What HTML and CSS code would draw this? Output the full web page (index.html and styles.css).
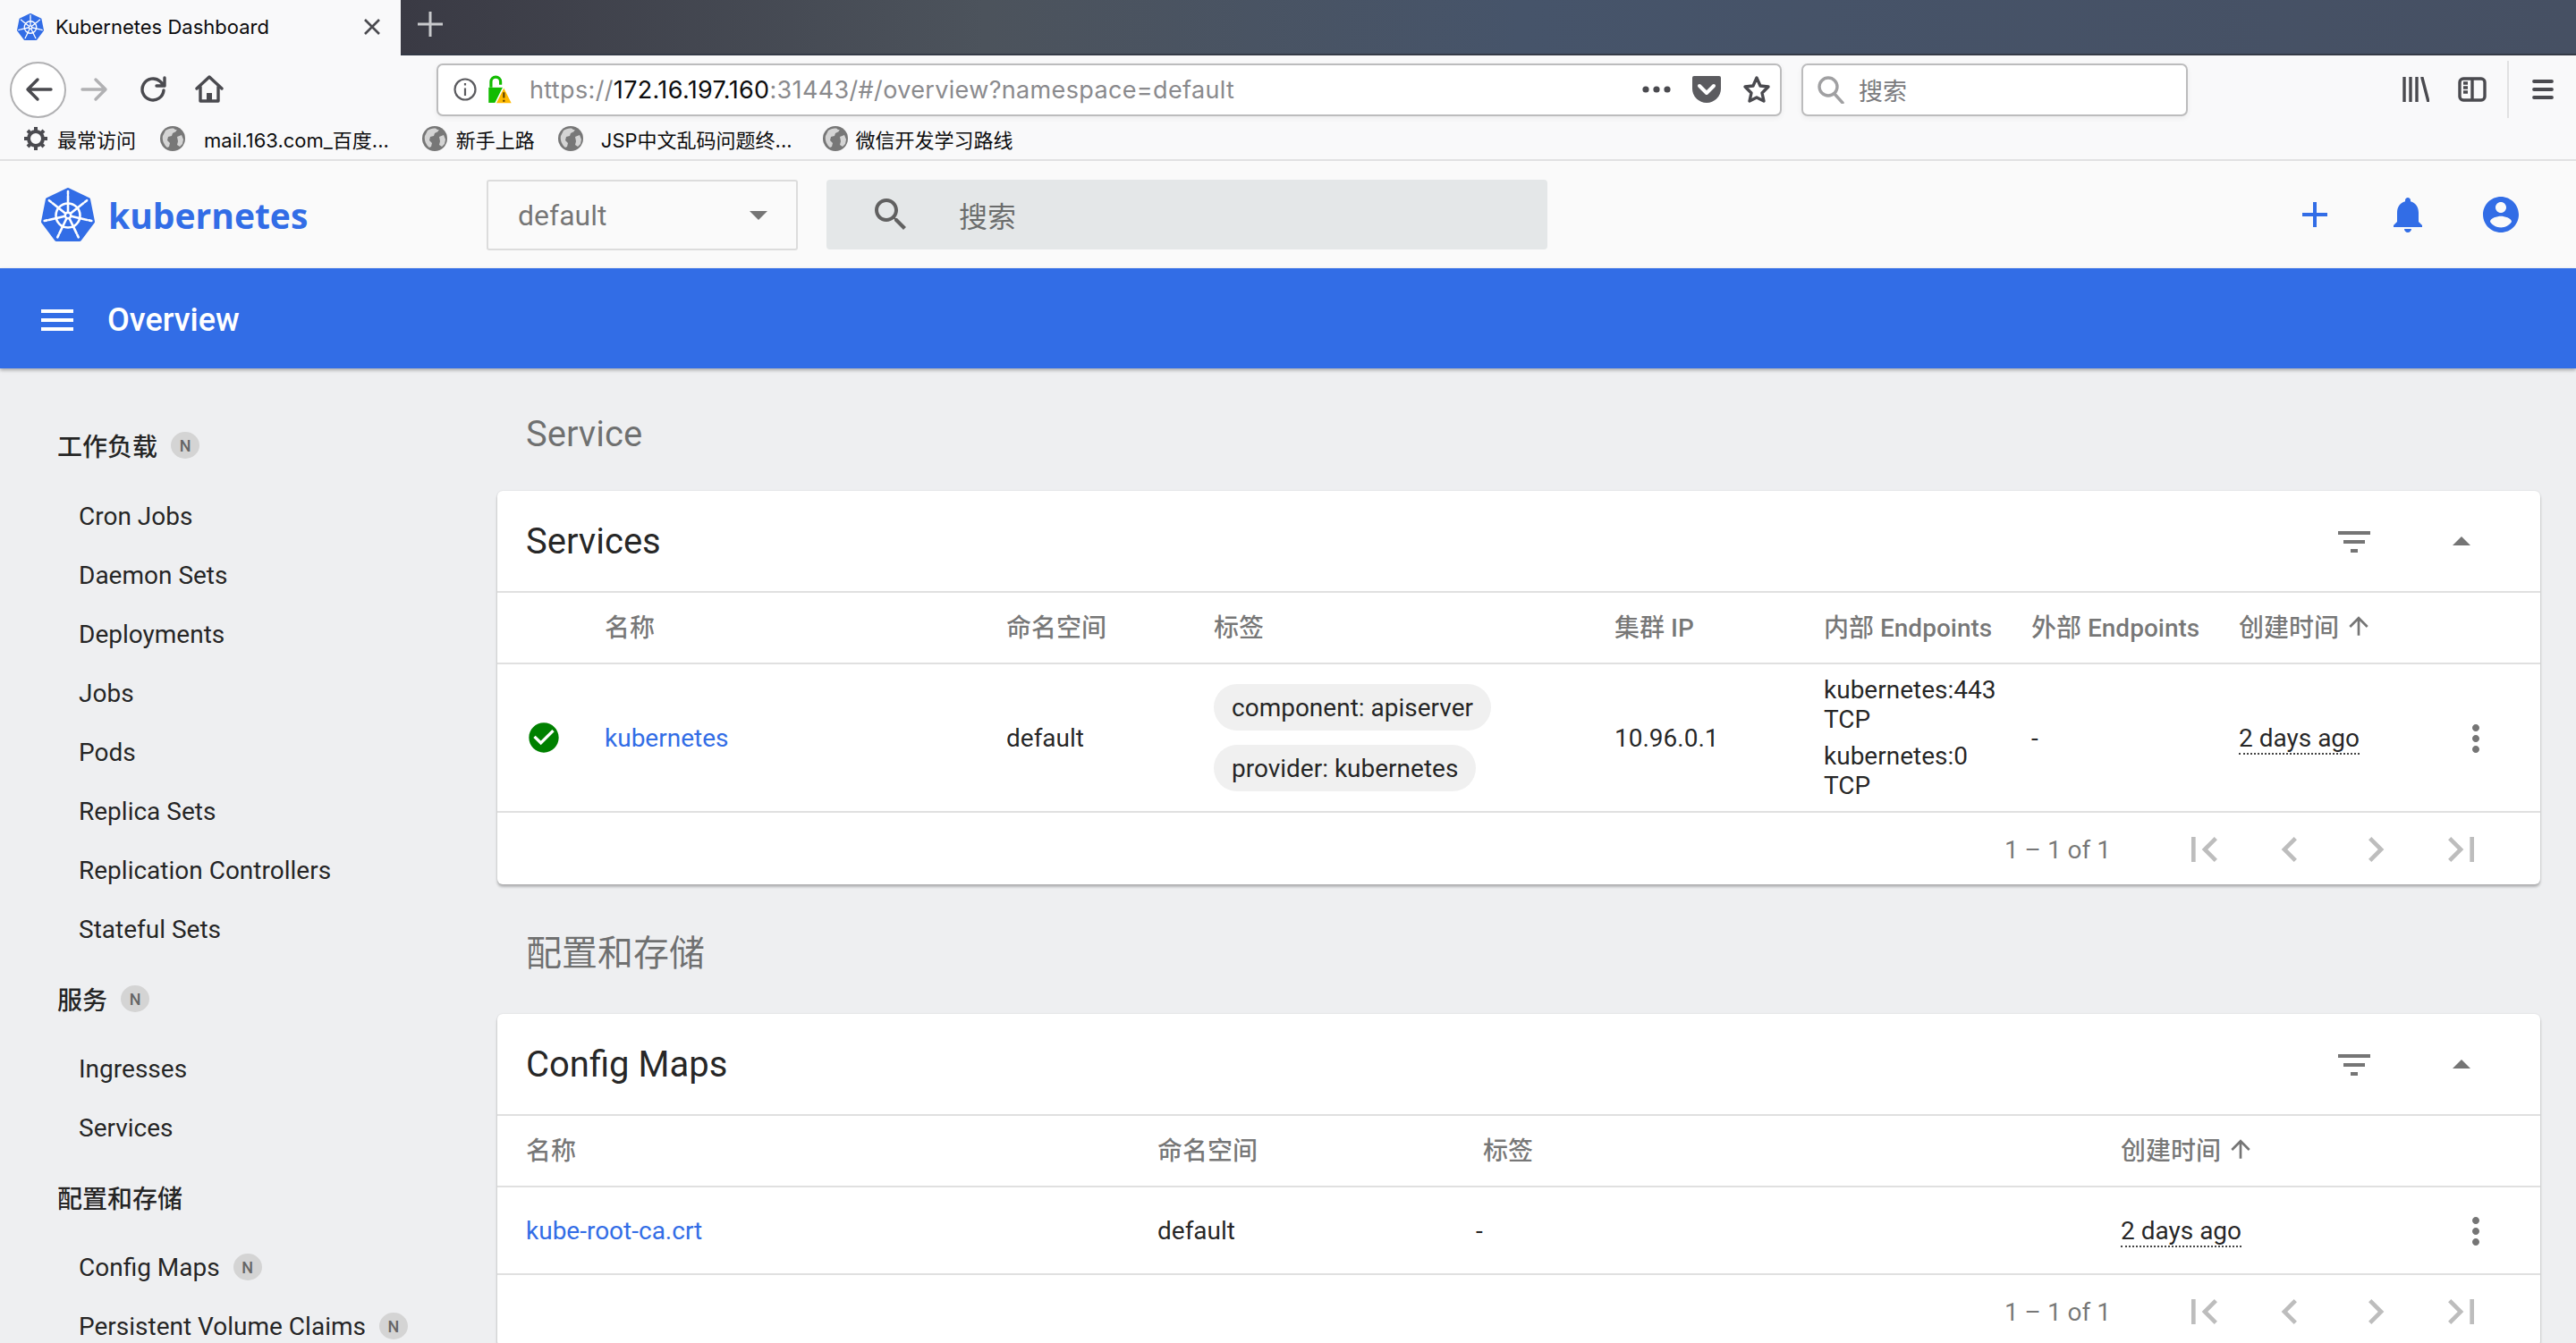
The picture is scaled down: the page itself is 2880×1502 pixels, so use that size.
FILE: index.html
```html
<!DOCTYPE html>
<html lang="zh">
<head>
<meta charset="utf-8">
<title>Kubernetes Dashboard</title>
<link rel="stylesheet" href="styles.css">
</head>
<body>
<svg class="sprite" aria-hidden="true">
  <defs>
    <g id="spoke">
      <line x1="30" y1="31" x2="30" y2="9" />
      <line x1="30" y1="7" x2="30" y2="4" />
    </g>
    <symbol id="k8s" viewBox="0 0 60 60">
      <path d="M30 2 L53 13 L58 38 L43 58 L17 58 L2 38 L7 13 Z" fill="#326de6" stroke="#326de6" stroke-width="4" stroke-linejoin="round"/>
      <g stroke="#fff" fill="none" stroke-width="2.6" stroke-linecap="round">
        <circle cx="30" cy="31" r="13.5"/>
        <use href="#spoke"/>
        <use href="#spoke" transform="rotate(51.4 30 31)"/>
        <use href="#spoke" transform="rotate(102.9 30 31)"/>
        <use href="#spoke" transform="rotate(154.3 30 31)"/>
        <use href="#spoke" transform="rotate(205.7 30 31)"/>
        <use href="#spoke" transform="rotate(257.1 30 31)"/>
        <use href="#spoke" transform="rotate(308.6 30 31)"/>
      </g>
      <circle cx="30" cy="31" r="4.5" fill="#fff"/>
      <circle cx="30" cy="31" r="2" fill="#326de6"/>
    </symbol>
    <symbol id="globe" viewBox="0 0 28 28">
      <circle cx="14" cy="14" r="14" fill="#777"/>
      <path d="M6 5c3-2 7-3 10-2l2 3-4 2-1 3-4 1-1 4 3 3-1 4-2 1C4 21 2 15 3 11zM19 12l5-2 2 5-1 5-3 3-3-2 1-4zM14 4h5l-2 2z" fill="#d4d4d4"/>
    </symbol>
    <symbol id="i-search" viewBox="0 0 24 24"><path d="M15.5 14h-.79l-.28-.27C15.41 12.59 16 11.11 16 9.5 16 5.91 13.09 3 9.5 3S3 5.91 3 9.5 5.91 16 9.5 16c1.61 0 3.09-.59 4.23-1.57l.27.28v.79l5 4.99L20.49 19l-4.99-5zm-6 0C7.01 14 5 11.99 5 9.5S7.01 5 9.5 5 14 7.01 14 9.5 11.99 14 9.5 14z"/></symbol>
    <symbol id="i-add" viewBox="0 0 24 24"><path d="M19 13h-6v6h-2v-6H5v-2h6V5h2v6h6v2z"/></symbol>
    <symbol id="i-bell" viewBox="0 0 24 24"><path d="M12 22c1.1 0 2-.9 2-2h-4c0 1.1.89 2 2 2zm6-6v-5c0-3.07-1.64-5.64-4.5-6.32V4c0-.83-.67-1.5-1.5-1.5s-1.5.67-1.5 1.5v.68C7.63 5.36 6 7.92 6 11v5l-2 2v1h16v-1l-2-2z"/></symbol>
    <symbol id="i-account" viewBox="0 0 24 24"><path d="M12 2C6.48 2 2 6.48 2 12s4.48 10 10 10 10-4.48 10-10S17.52 2 12 2zm0 3c1.66 0 3 1.34 3 3s-1.34 3-3 3-3-1.34-3-3 1.34-3 3-3zm0 14.2c-2.5 0-4.71-1.28-6-3.22.03-1.99 4-3.08 6-3.08 1.99 0 5.97 1.09 6 3.08-1.29 1.94-3.5 3.22-6 3.22z"/></symbol>
    <symbol id="i-filter" viewBox="0 0 24 24"><path d="M10 18h4v-2h-4v2zM3 6v2h18V6H3zm3 7h12v-2H6v2z"/></symbol>
    <symbol id="i-up" viewBox="0 0 24 24"><path d="M7 14l5-5 5 5z"/></symbol>
    <symbol id="i-sort" viewBox="0 0 24 24"><path d="M4 12l1.41 1.41L11 7.83V20h2V7.83l5.58 5.59L20 12l-8-8-8 8z"/></symbol>
    <symbol id="i-more" viewBox="0 0 24 24"><path d="M12 8c1.1 0 2-.9 2-2s-.9-2-2-2-2 .9-2 2 .9 2 2 2zm0 2c-1.1 0-2 .9-2 2s.9 2 2 2 2-.9 2-2-.9-2-2-2zm0 6c-1.1 0-2 .9-2 2s.9 2 2 2 2-.9 2-2-.9-2-2-2z"/></symbol>
    <symbol id="i-first" viewBox="0 0 24 24"><path d="M18.41 16.59L13.82 12l4.59-4.59L17 6l-6 6 6 6zM6 6h2v12H6z"/></symbol>
    <symbol id="i-prev" viewBox="0 0 24 24"><path d="M15.41 7.41L14 6l-6 6 6 6 1.41-1.41L10.83 12z"/></symbol>
    <symbol id="i-next" viewBox="0 0 24 24"><path d="M10 6L8.59 7.41 13.17 12l-4.58 4.59L10 18l6-6z"/></symbol>
    <symbol id="i-last" viewBox="0 0 24 24"><path d="M5.59 7.41L10.18 12l-4.59 4.59L7 18l6-6-6-6zM16 6h2v12h-2z"/></symbol>
    <symbol id="i-check" viewBox="0 0 24 24"><path d="M12 2C6.48 2 2 6.48 2 12s4.48 10 10 10 10-4.48 10-10S17.52 2 12 2zm-2 15l-5-5 1.41-1.41L10 14.17l7.59-7.59L19 8l-9 9z"/></symbol>
    <symbol id="i-menu" viewBox="0 0 24 24"><path d="M3 18h18v-2H3v2zm0-5h18v-2H3v2zm0-7v2h18V6H3z"/></symbol>
  </defs>
</svg>

<div class="tabstrip">
  <div class="tab">
    <svg class="tab-icon"><use href="#k8s"/></svg>
    <span class="tab-title">Kubernetes Dashboard</span>
    <svg class="tab-close" viewBox="0 0 20 20"><path d="M2 2L18 18M18 2L2 18"/></svg>
  </div>
  <svg class="tab-new" viewBox="0 0 28 28"><path d="M14 0V28M0 14H28"/></svg>
</div>

<div class="navbar">
  <span class="back-btn">
    <svg class="ff-icon" viewBox="0 0 32 32"><path d="M30 16H4M15 5L4 16L15 27"/></svg>
  </span>
  <svg class="ff-icon dim fwd" viewBox="0 0 32 32"><path d="M2 16H28M17 5L28 16L17 27"/></svg>
  <svg class="ff-icon reload" viewBox="0 0 32 32"><path d="M27 17a12 12 0 1 1-4-10l5 5M28 3V12H19"/></svg>
  <svg class="ff-icon home" viewBox="0 0 32 32"><path d="M2 15L16 2L30 15M6 13V29H26V13"/><path class="solid" d="M13 29V20H19V29Z"/></svg>
  <div class="urlbar">
    <svg class="info" viewBox="0 0 26 26"><circle cx="13" cy="13" r="11.5"/><path d="M13 11.5V20M13 6V8.5"/></svg>
    <svg class="lock" viewBox="0 0 28 30">
      <path d="M3 13H18V29H3Z" fill="#12bc00"/>
      <path d="M5.500 13V7a5 5 0 0 1 10 0V10" fill="none" stroke="#12bc00" stroke-width="3"/>
      <path d="M19 12L28 30H10Z" fill="#ffb900" stroke="#fff" stroke-width="1.500"/>
      <path d="M19 18V24M19 26V28" stroke="#5a3e00" stroke-width="2" fill="none"/>
    </svg>
    <span class="url"><span class="url-dim">https://</span>172.16.197.160<span class="url-dim">:31443/#/overview?namespace=default</span></span>
    <svg class="dots" viewBox="0 0 32 8"><circle cx="4" cy="4" r="3.600"/><circle cx="16" cy="4" r="3.600"/><circle cx="28" cy="4" r="3.600"/></svg>
    <svg class="pocket" viewBox="0 0 32 30"><path class="pk" d="M2 0H30a2 2 0 0 1 2 2V14A16 16 0 0 1 0 14V2a2 2 0 0 1 2-2Z"/><path class="pk-v" d="M8 11L16 19L24 11"/></svg>
    <svg class="star" viewBox="0 0 32 32"><path d="M16 3L20 12L29 13L22 20L24 29L16 25L8 29L10 20L3 13L12 12Z"/></svg>
  </div>
  <div class="searchbar">
    <svg class="sb-icon" viewBox="0 0 32 32"><circle cx="13" cy="13" r="10"/><path d="M20 21L29 31"/></svg>
    <span class="sb-text">搜索</span>
  </div>
  <svg class="lib" viewBox="0 0 30 28"><path d="M2 0V28M9 0V28M16 0V28M22 1L29 28"/></svg>
  <svg class="sidebar-ico" viewBox="0 0 32 28"><rect x="2" y="2" width="28" height="24" rx="4"/><path d="M16 2V26M6 7H11M6 12H11M6 17H11"/></svg>
  <span class="divider"></span>
  <svg class="burger" viewBox="0 0 24 24"><path d="M2 3H22M2 12H22M2 21H22"/></svg>
</div>

<div class="bookmarks">
  <svg class="gear" viewBox="0 0 28 28"><circle cx="14" cy="14" r="8" /><path d="M14 1V6M14 22V27M1 14H6M22 14H27M5 5L8.500 8.500M19.500 19.500L23 23M23 5L19.500 8.500M8.500 19.500L5 23"/></svg>
  <span class="bm bm-first">最常访问</span>
  <svg class="bm-globe g-mail"><use href="#globe"/></svg>
  <span class="bm bm-mail">mail.163.com_百度...</span>
  <svg class="bm-globe g-new"><use href="#globe"/></svg>
  <span class="bm bm-new">新手上路</span>
  <svg class="bm-globe g-jsp"><use href="#globe"/></svg>
  <span class="bm bm-jsp">JSP中文乱码问题终...</span>
  <svg class="bm-globe g-wx"><use href="#globe"/></svg>
  <span class="bm bm-wx">微信开发学习路线</span>
</div>

<header class="app-head">
  <svg class="logo-mark"><use href="#k8s"/></svg>
  <span class="logo-text">kubernetes</span>
  <div class="ns-select">
    <span>default</span>
    <svg class="ns-caret" viewBox="7 10 10 5"><path d="M7 10l5 5 5-5z"/></svg>
  </div>
  <div class="app-search">
    <svg class="app-search-icon"><use href="#i-search"/></svg>
    <span>搜索</span>
  </div>
  <div class="app-actions">
    <svg class="act"><use href="#i-add"/></svg>
    <svg class="act"><use href="#i-bell"/></svg>
    <svg class="act"><use href="#i-account"/></svg>
  </div>
</header>

<div class="titlebar">
  <svg class="titlebar-menu"><use href="#i-menu"/></svg>
  <span class="titlebar-text">Overview</span>
</div>

<div class="main">
  <nav class="side">
    <div class="side-head">工作负载<span class="n">N</span></div>
    <a class="side-item">Cron Jobs</a>
    <a class="side-item">Daemon Sets</a>
    <a class="side-item">Deployments</a>
    <a class="side-item">Jobs</a>
    <a class="side-item">Pods</a>
    <a class="side-item">Replica Sets</a>
    <a class="side-item">Replication Controllers</a>
    <a class="side-item">Stateful Sets</a>
    <div class="side-head">服务<span class="n">N</span></div>
    <a class="side-item">Ingresses</a>
    <a class="side-item">Services</a>
    <div class="side-head">配置和存储</div>
    <a class="side-item">Config Maps<span class="n">N</span></a>
    <a class="side-item">Persistent Volume Claims<span class="n">N</span></a>
  </nav>

  <main class="content">
    <h2 class="section">Service</h2>
    <section class="card">
      <div class="card-head">
        <h3>Services</h3>
        <svg class="ci filter"><use href="#i-filter"/></svg>
        <svg class="ci collapse"><use href="#i-up"/></svg>
      </div>
      <div class="tr th svc">
        <span></span><span>名称</span><span>命名空间</span><span>标签</span><span>集群 IP</span><span>内部 Endpoints</span><span>外部 Endpoints</span>
        <span class="sorted">创建时间<svg class="sort"><use href="#i-sort"/></svg></span><span></span>
      </div>
      <div class="tr td svc row-tall">
        <svg class="ok"><use href="#i-check"/></svg>
        <a class="link">kubernetes</a>
        <span>default</span>
        <span class="chips"><span class="chip">component: apiserver</span><span class="chip">provider: kubernetes</span></span>
        <span>10.96.0.1</span>
        <span class="eps"><span class="ep">kubernetes:443<br>TCP</span><span class="ep">kubernetes:0<br>TCP</span></span>
        <span>-</span>
        <span><span class="age">2 days ago</span></span>
        <svg class="more"><use href="#i-more"/></svg>
      </div>
      <div class="pager">
        <span class="pager-text">1 – 1 of 1</span>
        <svg class="pg"><use href="#i-first"/></svg>
        <svg class="pg"><use href="#i-prev"/></svg>
        <svg class="pg"><use href="#i-next"/></svg>
        <svg class="pg"><use href="#i-last"/></svg>
      </div>
    </section>

    <h2 class="section second">配置和存储</h2>
    <section class="card">
      <div class="card-head">
        <h3>Config Maps</h3>
        <svg class="ci filter"><use href="#i-filter"/></svg>
        <svg class="ci collapse"><use href="#i-up"/></svg>
      </div>
      <div class="tr th cfg">
        <span>名称</span><span>命名空间</span><span>标签</span>
        <span class="sorted">创建时间<svg class="sort"><use href="#i-sort"/></svg></span><span></span>
      </div>
      <div class="tr td cfg row-short">
        <a class="link">kube-root-ca.crt</a>
        <span>default</span>
        <span class="dash">-</span>
        <span><span class="age">2 days ago</span></span>
        <svg class="more"><use href="#i-more"/></svg>
      </div>
      <div class="pager">
        <span class="pager-text">1 – 1 of 1</span>
        <svg class="pg"><use href="#i-first"/></svg>
        <svg class="pg"><use href="#i-prev"/></svg>
        <svg class="pg"><use href="#i-next"/></svg>
        <svg class="pg"><use href="#i-last"/></svg>
      </div>
    </section>
  </main>
</div>
</body>
</html>
```
FILE: styles.css
```css
* { box-sizing: border-box; }
html, body { margin: 0; height: 1502px; overflow: hidden; }
body {
  font-family: Roboto, "Noto Sans CJK SC", sans-serif;
  background: #eeeff1;
  color: rgba(0,0,0,.87);
}
svg { display: block; flex: none; }
.sprite { width: 0; height: 0; position: absolute; overflow: hidden; }

/* browser tab strip */
.tabstrip {
  height: 62px;
  display: flex;
  align-items: center;
  background: linear-gradient(90deg, #3a3a44 448px, #4c535c 1100px, #46546a 1700px, #465063 2880px);
  border-bottom: 2px solid #343a46;
}
.tab {
  width: 448px;
  height: 62px;
  margin-bottom: -2px;
  padding: 0 18px 2px 19px;
  background: #f9f9fa;
  display: flex;
  align-items: center;
  font-family: Inter, "Noto Sans CJK SC", sans-serif;
}
.tab-icon { width: 30px; height: 30px; }
.tab-title { margin-left: 13px; font-size: 22px; color: #0c0c0d; flex: 1; }
.tab-close { width: 20px; height: 20px; fill: none; stroke: #4a4a4f; stroke-width: 2.6; margin-right: 4px; }
.tab-new { width: 28px; height: 28px; margin-left: 19px; fill: none; stroke: #c8c9cc; stroke-width: 3; margin-top: -6px; }

/* navigation bar */
.navbar {
  height: 76px;
  background: #f9f9fa;
  display: flex;
  align-items: center;
  padding: 0 0 0 11px;
}
.back-btn {
  width: 63px; height: 63px;
  border: 2px solid #b1b1b3;
  border-radius: 50%;
  background: #fff;
  display: flex; align-items: center; justify-content: center;
  margin-right: 16px;
}
.ff-icon { width: 32px; height: 32px; fill: none; stroke: #4a4a4f; stroke-width: 3.400; stroke-linecap: round; stroke-linejoin: round; }
.ff-icon.dim { stroke: #b1b1b3; }
.fwd { margin-right: 34px; }
.reload { margin-right: 30px; }
.home .solid { fill: #4a4a4f; stroke: none; }
.urlbar {
  width: 1504px; height: 59px;
  margin-left: 238px;
  border: 2px solid #bcbcbd;
  border-radius: 7px;
  background: #fff;
  box-shadow: 0 2px 6px rgba(0,0,0,.06);
  display: flex; align-items: center;
  padding-left: 17px;
  padding-right: 10px;
}
.info { width: 26px; height: 26px; fill: none; stroke: #5b5b5f; stroke-width: 2.200; }
.lock { width: 30px; height: 32px; margin-left: 10px; }
.url {
  margin-left: 19px;
  padding-top: 1px;
  flex: 1;
  font-family: Inter, "Noto Sans CJK SC", sans-serif;
  font-size: 27px;
  letter-spacing: .35px;
  color: #0c0c0d;
}
.url-dim { color: #8a8a8d; }
.dots { width: 32px; height: 8px; fill: #4a4a4f; }
.pocket { width: 32px; height: 30px; margin-left: 24px; }
.pk { fill: #5b5b5f; }
.pk-v { fill: none; stroke: #fff; stroke-width: 4; stroke-linecap: round; stroke-linejoin: round; }
.star { width: 32px; height: 32px; margin-left: 24px; fill: none; stroke: #4a4a4f; stroke-width: 3.400; stroke-linejoin: round; }
.searchbar {
  width: 432px; height: 59px;
  margin-left: 22px;
  border: 2px solid #bcbcbd;
  border-radius: 7px;
  background: #fff;
  box-shadow: 0 2px 6px rgba(0,0,0,.06);
  display: flex; align-items: center;
  padding-left: 15px;
}
.sb-icon { width: 32px; height: 32px; fill: none; stroke: #a0a0a2; stroke-width: 3.400; stroke-linecap: round; }
.sb-text { margin-left: 15px; font-size: 27px; color: #7b7b7e; font-family: "Noto Sans CJK SC", sans-serif; }
.lib { width: 30px; height: 28px; margin-left: 240px; fill: none; stroke: #4a4a4f; stroke-width: 3.400; stroke-linecap: round; }
.sidebar-ico { width: 32px; height: 28px; margin-left: 32px; fill: none; stroke: #4a4a4f; stroke-width: 3.400; }
.divider { width: 2px; height: 64px; margin-left: 23px; background: #e1e1e2; }
.burger { width: 24px; height: 24px; margin-left: 26px; fill: none; stroke: #4a4a4f; stroke-width: 3.800; stroke-linecap: round; }

/* bookmarks */
.bookmarks {
  height: 42px;
  background: #f9f9fa;
  border-bottom: 2px solid #e1e1e2;
  display: flex;
  align-items: center;
  padding: 0 0 6px 26px;
  font-family: Inter, "Noto Sans CJK SC", sans-serif;
  font-size: 22px;
  color: #0c0c0d;
}
.gear { width: 28px; height: 28px; fill: none; stroke: #4a4a4f; stroke-width: 4; }
.bm { white-space: nowrap; }
.bm-first { margin-left: 10px; }
.bm-globe { width: 28px; height: 28px; }
.g-mail { margin-left: 27px; }
.bm-mail { margin-left: 21px; }
.g-new { margin-left: 37px; }
.bm-new { margin-left: 10px; }
.g-jsp { margin-left: 26px; }
.bm-jsp { margin-left: 20px; }
.g-wx { margin-left: 34px; }
.bm-wx { margin-left: 9px; }

/* app header */
.app-head {
  height: 120px;
  background: #fafafa;
  display: flex;
  align-items: center;
  padding-left: 46px;
}
.logo-mark { width: 60px; height: 60px; }
.logo-text {
  margin-left: 15px;
  width: 423px;
  font-family: "Open Sans", sans-serif;
  font-weight: 700;
  font-size: 39px;
  color: #326de6;
}
.ns-select {
  width: 348px; height: 79px;
  border: 2px solid #dcdcdc;
  border-radius: 3px;
  display: flex; align-items: center; justify-content: space-between;
  padding: 1px 32px 0 33px;
  font-size: 32px;
  color: rgba(0,0,0,.54);
}
.ns-caret { width: 20px; height: 10px; fill: #757575; }
.app-search {
  width: 806px; height: 78px;
  margin-left: 32px;
  background: #e4e7e8;
  border-radius: 4px;
  display: flex; align-items: center;
  padding-left: 48px;
  font-size: 32px;
  color: rgba(0,0,0,.54);
}
.app-search-icon { width: 48px; height: 48px; fill: #616161; margin-right: 52px; }
.app-actions { display: flex; margin-left: auto; margin-right: 60px; gap: 56px; }
.act { width: 48px; height: 48px; fill: #326de6; }

/* blue bar */
.titlebar {
  height: 112px;
  background: #326de6;
  display: flex; align-items: center;
  padding: 4px 0 0 40px;
  color: #fff;
  box-shadow: 0 2px 4px rgba(0,0,0,.3);
  position: relative;
}
.titlebar-menu { width: 48px; height: 48px; fill: #fff; }
.titlebar-text { margin-left: 32px; font-size: 36px; font-weight: 500; }

/* main */
.main { display: flex; height: 1090px; overflow: hidden; }
.side { width: 556px; flex: none; padding: 53px 0 0 64px; }
.side-head {
  height: 66px;
  margin: 12px 0;
  display: flex; align-items: center;
  font-size: 28px; font-weight: 500;
}
.side-head:first-child { margin: 0 0 13px; }
.side-item {
  height: 66px;
  padding-left: 24px;
  display: flex; align-items: center;
  font-size: 28px;
}
.n {
  width: 32px; height: 30px;
  margin-left: 15px;
  border-radius: 50%;
  background: #d4d4d4;
  color: #666;
  font-size: 18px; font-weight: 500;
  display: flex; align-items: center; justify-content: center;
}

.content { flex: 1; padding: 0 40px 0 0; min-width: 0; }
.section {
  margin: 44px 0 33px 32px;
  font-size: 40px; font-weight: 400; line-height: 60px;
  color: rgba(0,0,0,.54);
}
.section.second { margin: 48px 0 37px 32px; }
.card {
  background: #fff;
  border-radius: 6px;
  box-shadow: 0 3px 3px rgba(0,0,0,.25), 0 0 2px rgba(0,0,0,.12);
}
.card-head {
  height: 114px;
  border-bottom: 2px solid #e0e0e0;
  display: flex; align-items: center;
  padding-left: 32px;
}
.card-head h3 { margin: 0; flex: 1; font-size: 40px; font-weight: 400; }
.ci { width: 48px; height: 48px; fill: #757575; margin-top: 2px; }
.filter { margin-right: 72px; }
.collapse { margin-right: 64px; }
.tr {
  display: grid;
  align-items: center;
  border-bottom: 2px solid #e0e0e0;
  font-size: 28px;
}
.svc { grid-template-columns: 120px 449px 232px 448px 234px 232px 232px 1fr 112px; }
.cfg { grid-template-columns: 706px 364px 713px 1fr 112px; padding-left: 32px; }
.th { height: 80px; font-weight: 500; color: rgba(0,0,0,.54); padding-bottom: 4px; }
.row-tall { height: 166px; }
.row-short { height: 98px; }
.sorted { display: flex; align-items: center; gap: 6px; }
.sort { width: 32px; height: 32px; fill: #757575; }
.ok { width: 40px; height: 40px; fill: #008000; margin-left: 32px; }
.link { color: #326de6; }
.chips { display: flex; flex-direction: column; gap: 16px; align-items: flex-start; }
.chip {
  height: 52px; padding: 0 20px;
  border-radius: 26px;
  background: #f0f0f0;
  display: flex; align-items: center;
}
.eps { display: flex; flex-direction: column; gap: 8px; line-height: 33px; }
.dash { margin-left: -8px; }
.age { border-bottom: 2px dotted #444; }
.more { width: 48px; height: 48px; fill: #757575; justify-self: center; margin: 2px 0 0 -32px; }
.pager {
  height: 80px;
  display: flex; align-items: center; justify-content: flex-end;
  padding: 2px 60px 0 0;
  gap: 40px;
  color: rgba(0,0,0,.54);
  font-size: 28px;
}
.pager-text { margin-right: 36px; }
.pg { width: 56px; height: 56px; fill: #bdbdbd; }
```
